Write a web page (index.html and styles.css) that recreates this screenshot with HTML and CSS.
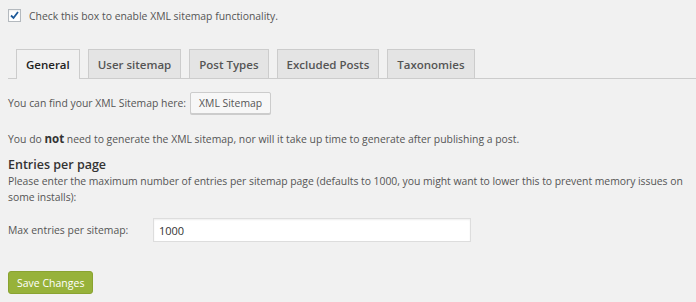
FILE: index.html
```html
<!DOCTYPE html>
<html>
<head>
<meta charset="utf-8">
<link rel="stylesheet" href="styles.css">
</head>
<body>
<div class="page">
  <label class="enable">
    <span class="check"><svg width="11" height="11" viewBox="0 0 11 11"><path d="M2 5.5 L4.5 8 L9 2" fill="none" stroke="#1e5a9a" stroke-width="1.8"/></svg></span>
    <span>Check this box to enable XML sitemap functionality.</span>
  </label>

  <nav class="tabs">
    <span class="tab active">General</span>
    <span class="tab">User sitemap</span>
    <span class="tab">Post Types</span>
    <span class="tab">Excluded Posts</span>
    <span class="tab">Taxonomies</span>
  </nav>

  <div class="find">
    <span>You can find your XML Sitemap here:</span>
    <span class="btn">XML Sitemap</span>
  </div>

  <p class="note">You do <strong>not</strong> need to generate the XML sitemap, nor will it take up time to generate after publishing a post.</p>

  <h3 class="heading">Entries per page</h3>
  <p class="desc">Please enter the maximum number of entries per sitemap page (defaults to 1000, you might want to lower this to prevent memory issues on some installs):</p>

  <div class="field">
    <span class="field-label">Max entries per sitemap:</span>
    <span class="input">1000</span>
  </div>

  <span class="save">Save Changes</span>
</div>
</body>
</html>
```

FILE: styles.css
```css
html, body {
  margin: 0;
  padding: 0;
  background: #f1f1f1;
}
body {
  font-family: "Open Sans", "Noto Sans", sans-serif;
  font-size: 10.4px;
  color: #555;
  width: 696px;
  height: 302px;
  overflow: hidden;
}
.page {
  padding: 9px 0 0 8px;
}
.enable {
  display: flex;
  align-items: center;
  gap: 8px;
  height: 13px;
}
.check {
  display: flex;
  align-items: center;
  justify-content: center;
  width: 11px;
  height: 11px;
  background: #fff;
  border: 1px solid #b4b9be;
  box-shadow: inset 0 1px 2px rgba(0,0,0,0.07);
}
.tabs {
  display: flex;
  gap: 8px;
  margin-top: 27px;
  padding-left: 8px;
  border-bottom: 1px solid #ccc;
  height: 29px;
}
.tab {
  display: flex;
  align-items: center;
  padding: 0 9px;
  height: 28px;
  border: 1px solid #ccc;
  border-bottom: none;
  background: #e4e4e4;
  font-size: 11.5px;
  font-weight: 600;
  color: #555;
}
.tab.active {
  background: #f1f1f1;
  color: #222;
  height: 29px;
  margin-bottom: -1px;
}
.find {
  display: flex;
  align-items: center;
  gap: 4px;
  margin-top: 13px;
}
.btn {
  display: flex;
  align-items: center;
  padding: 0 8px;
  height: 20px;
  background: #f7f7f7;
  border: 1px solid #ccc;
  border-radius: 2px;
  box-shadow: 0 1px 0 #ccc;
  color: #555;
  font-size: 10.4px;
}
.note {
  margin: 17px 0 0;
  line-height: 16px;
}
.note strong {
  font-weight: 700;
  color: #333;
  font-size: 11.5px;
}
.heading {
  margin: 10px 0 0;
  font-size: 12.5px;
  font-weight: 600;
  color: #333;
  line-height: 16px;
}
.desc {
  margin: 0;
  line-height: 16px;
  letter-spacing: -0.03px;
}
.field {
  display: flex;
  align-items: center;
  margin-top: 13px;
}
.field-label {
  width: 145px;
}
.input {
  display: flex;
  align-items: center;
  box-sizing: border-box;
  width: 318px;
  height: 24px;
  padding: 0 5px;
  background: #fff;
  border: 1px solid #ddd;
  box-shadow: inset 0 1px 2px rgba(0,0,0,0.07);
  color: #333;
  font-size: 11px;
}
.save {
  display: inline-flex;
  align-items: center;
  margin-top: 29px;
  height: 23px;
  padding: 0 8px;
  box-sizing: border-box;
  background: #97b23a;
  border: 1px solid #8aa331;
  border-radius: 3px;
  color: #fff;
  font-size: 10.5px;
}
```
